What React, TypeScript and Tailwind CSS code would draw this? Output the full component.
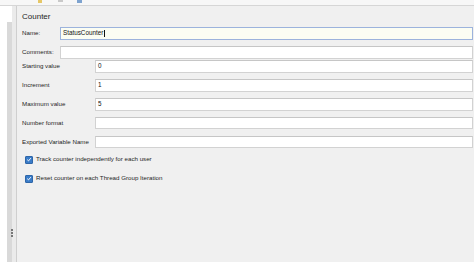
import React from "react";

const font = { fontFamily: '"Liberation Sans", Arial, sans-serif' };

function Field({
  label,
  labelWidth,
  value,
  focused,
  className,
}: {
  label: string;
  labelWidth: string;
  value?: string;
  focused?: boolean;
  className?: string;
}) {
  return (
    <div className={`flex items-center ${className ?? ""}`}>
      <span className={`${labelWidth} shrink-0 text-[6.2px] text-[#1e1e1e] leading-none`}>{label}</span>
      <div
        className={`flex-1 h-full flex items-center pl-[2px] text-[6.3px] leading-none text-[#111] ${
          focused
            ? "border border-[#9cb3dc] bg-[#fbfdf3]"
            : "border border-[#d2d2d2] border-t-[#c6c6c6] bg-white"
        }`}
      >
        {value}
        {focused && <span className="w-px h-[7px] bg-[#111] ml-[0.5px]" />}
      </div>
    </div>
  );
}

function Check({ label, className }: { label: string; className?: string }) {
  return (
    <div className={`flex items-center gap-[3px] pl-[3px] ${className ?? ""}`}>
      <span className="w-[8px] h-[8px] rounded-[1px] bg-[#3a7cc8] border border-[#2f66a8] flex items-center justify-center">
        <svg viewBox="0 0 10 10" className="w-[7px] h-[7px]">
          <path d="M2 5.2 L4.2 7.3 L8 2.8" stroke="white" strokeWidth="1.6" fill="none" />
        </svg>
      </span>
      <span className="text-[6.2px] leading-none text-[#1e1e1e]">{label}</span>
    </div>
  );
}

export default function App() {
  return (
    <div style={font} className="w-[474px] h-[262px] overflow-hidden flex flex-col bg-white">
      {/* toolbar remnant */}
      <div className="h-[6px] shrink-0 flex items-start border-b border-[#d6d6d6] bg-[#f7f7f7]">
        <span className="ml-[38px] w-[4px] h-[3px] bg-[#e6c766]" />
        <span className="ml-[16px] w-[5px] h-[2px] bg-[#c9c9c9]" />
        <span className="ml-[14px] w-[5px] h-[3px] bg-[#7ea3cf]" />
      </div>
      <div className="flex-1 flex">
        {/* left tree strip */}
        <div className="w-[7px] bg-white" />
        <div className="w-[5px] flex flex-col">
          <div className="h-[16px] bg-white" />
          <div className="flex-1 bg-[#d9d9d9]" />
        </div>
        <div className="w-[4px] bg-[#ebebeb] flex flex-col items-center justify-end pb-[25px]">
          <div className="flex flex-col gap-[1px] -ml-[4px]">
            <span className="w-[2px] h-[2px] bg-[#777]" />
            <span className="w-[2px] h-[2px] bg-[#777]" />
            <span className="w-[2px] h-[2px] bg-[#777]" />
          </div>
        </div>
        <div className="w-px bg-[#cfcfcf]" />
        {/* main panel */}
        <div className="flex-1 bg-[#f0f0f0] pl-[5px] pr-[1px] flex flex-col">
          <div className="mt-[5px] h-[12px] flex items-center text-[8px] text-[#1e1e1e]">Counter</div>
          <Field className="mt-[4px] h-[13px]" label="Name:" labelWidth="w-[38px]" value="StatusCounter" focused />
          <Field className="mt-[6px] h-[13px]" label="Comments:" labelWidth="w-[38px]" />
          <Field className="mt-[1px] h-[13px]" label="Starting value" labelWidth="w-[73px]" value="0" />
          <Field className="mt-[6px] h-[13px]" label="Increment" labelWidth="w-[73px]" value="1" />
          <Field className="mt-[6px] h-[13px]" label="Maximum value" labelWidth="w-[73px]" value="5" />
          <Field className="mt-[6px] h-[12px]" label="Number format" labelWidth="w-[73px]" />
          <Field className="mt-[7px] h-[12px]" label="Exported Variable Name" labelWidth="w-[73px]" />
          <Check className="mt-[7px] h-[9px]" label="Track counter independently for each user" />
          <Check className="mt-[10px] h-[9px]" label="Reset counter on each Thread Group Iteration" />
        </div>
      </div>
    </div>
  );
}
